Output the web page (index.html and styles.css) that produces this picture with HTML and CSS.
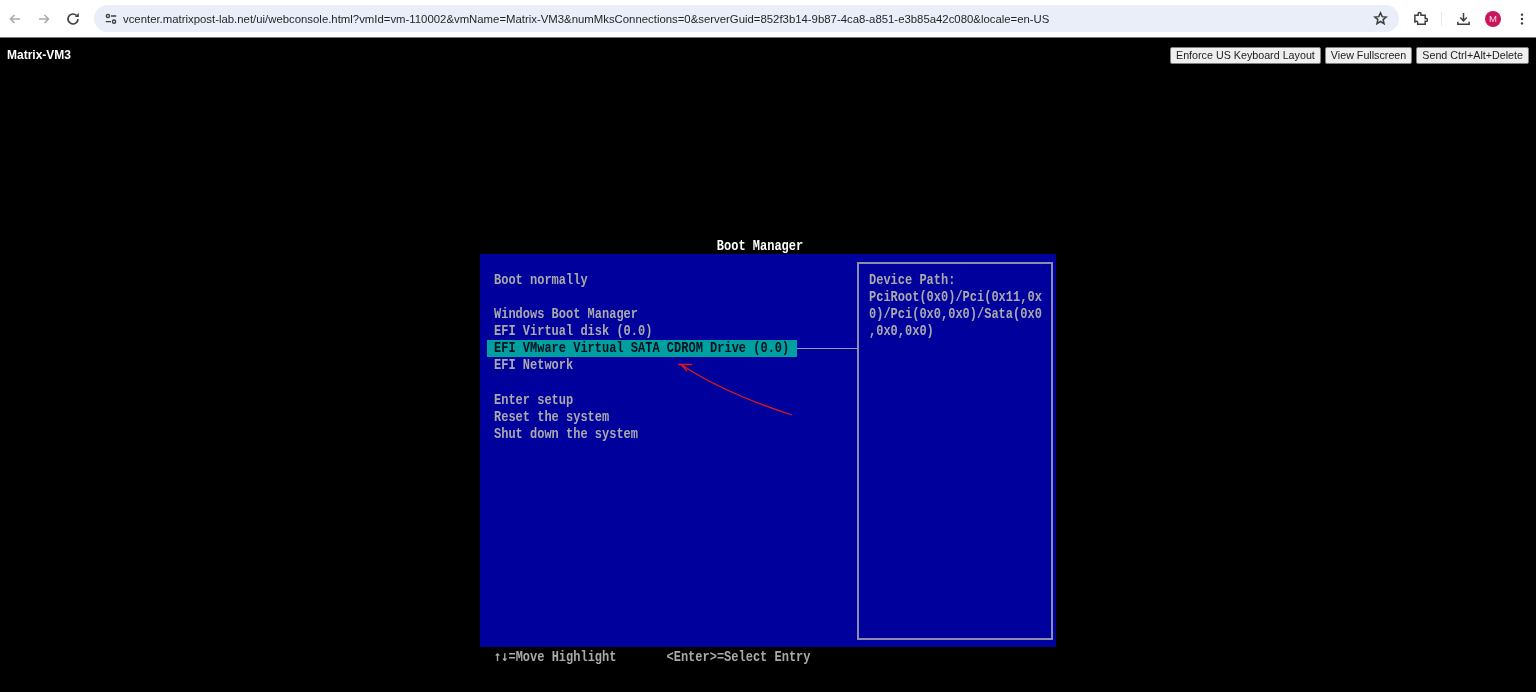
FILE: index.html
```html
<!DOCTYPE html>
<html lang="en">
<head>
<meta charset="utf-8">
<title>Matrix-VM3</title>
<link rel="stylesheet" href="styles.css">
</head>
<body>
<header class="chrome">
  <div class="nav">
    <svg class="ico dim" viewBox="0 0 16 16"><path d="M13 8H3.500M7.500 4 3.500 8l4 4"/></svg>
    <svg class="ico dim" viewBox="0 0 16 16"><path d="M3 8h9.500M8.500 4l4 4-4 4"/></svg>
    <svg class="ico" viewBox="0 0 16 16"><path d="M13 8a5 5 0 1 1-1.500-3.600"/><path class="solid" d="M13.800 2v4h-4z"/></svg>
  </div>
  <div class="omnibox">
    <span class="tune"><svg class="ico" viewBox="0 0 16 16"><circle cx="4.500" cy="4.500" r="1.800"/><path d="M8 4.500h6M2 11h6"/><circle cx="11.500" cy="11" r="1.800"/></svg></span>
    <span class="url">vcenter.matrixpost-lab.net/ui/webconsole.html?vmId=vm-110002&amp;vmName=Matrix-VM3&amp;numMksConnections=0&amp;serverGuid=852f3b14-9b87-4ca8-a851-e3b85a42c080&amp;locale=en-US</span>
    <svg class="ico star" viewBox="0 0 16 16"><path d="M8 2l1.800 4 4.200.4-3.200 2.800 1 4.300L8 11.200 4.200 13.500l1-4.300L2 6.400 6.200 6z"/></svg>
  </div>
  <div class="actions">
    <svg class="ico" viewBox="0 0 16 16"><path d="M2 4.500h3.500V3.200a1.500 1.500 0 0 1 3 0v1.300h4.500V8h1a1.500 1.500 0 0 1 0 3h-1v3H5v-1.500a1.500 1.500 0 0 0-3 0z"/></svg>
    <span class="sep"></span>
    <svg class="ico" viewBox="0 0 16 16"><path d="M8 2v8.500M4.500 7 8 10.500 11.500 7M2 11.500V14h12v-2.500"/></svg>
    <span class="avatar">M</span>
    <svg class="kebab" viewBox="0 0 4 16"><circle cx="2" cy="3" r="1.400"/><circle cx="2" cy="8" r="1.400"/><circle cx="2" cy="13" r="1.400"/></svg>
  </div>
</header>
<main class="console">
  <div class="toolbar">
    <h1 class="vm-name">Matrix-VM3</h1>
    <div class="buttons">
      <button class="btn">Enforce US Keyboard Layout</button>
      <button class="btn">View Fullscreen</button>
      <button class="btn">Send Ctrl+Alt+Delete</button>
    </div>
  </div>
  <section class="screen">
    <div class="screen-title"><span class="t">Boot Manager</span></div>
    <div class="bios">
      <ul class="menu">
        <li><span class="t">Boot normally</span></li>
        <li class="gap"><span class="t">Windows Boot Manager</span></li>
        <li><span class="t">EFI Virtual disk (0.0)</span></li>
        <li class="selected"><span class="t">EFI VMware Virtual SATA CDROM Drive (0.0)</span></li>
        <li><span class="t">EFI Network</span></li>
        <li class="gap"><span class="t">Enter setup</span></li>
        <li><span class="t">Reset the system</span></li>
        <li><span class="t">Shut down the system</span></li>
      </ul>
      <aside class="panel">
        <div><span class="t">Device Path:</span></div>
        <div><span class="t">PciRoot(0x0)/Pci(0x11,0x</span></div>
        <div><span class="t">0)/Pci(0x0,0x0)/Sata(0x0</span></div>
        <div><span class="t">,0x0,0x0)</span></div>
      </aside>
      <svg class="arrow" viewBox="0 0 130 70"><path d="M114 59C80 48 40 33 3 8.500M0 8.500h14M3 8.500l6 6.500"/></svg>
    </div>
    <div class="hints"><span class="t"><span class="arr">↑↓</span>=Move Highlight</span><span class="t">&lt;Enter&gt;=Select Entry</span></div>
  </section>
</main>
</body>
</html>
```
FILE: styles.css
```css
* { box-sizing: border-box; }
html, body { margin: 0; height: 100%; overflow: hidden; }
body { background: #000; display: flex; flex-direction: column; font-family: "Liberation Sans", Arial, sans-serif; }

.chrome { height: 38px; flex: none; background: #fff; display: flex; align-items: center; padding: 0 0 0 7px; border-bottom: 1px solid #777; filter: blur(.3px); }
.nav { display: flex; gap: 13px; width: 87px; align-items: center; }
.ico { width: 16px; height: 16px; fill: none; stroke: #3f3f3f; stroke-width: 1.6; flex: none; }
.ico.dim { stroke: #a9abae; }
.ico .solid { fill: #3f3f3f; stroke: none; }
.omnibox { width: 1305px; height: 27px; background: #e9eef8; border-radius: 14px; display: flex; align-items: center; padding: 0 11px 0 5px; flex: none; }
.tune { width: 24px; display: flex; justify-content: center; flex: none; }
.tune .ico { width: 14px; height: 14px; }
.url { flex: 1; font-size: 11.36px; color: #1f2124; white-space: nowrap; }
.star { width: 15px; height: 15px; }
.actions { display: flex; align-items: center; padding-left: 14px; }
.actions .ico { width: 15px; height: 15px; }
.sep { width: 1px; height: 14px; background: #dfe9f7; margin: 0 14px 0 13px; }
.avatar { width: 16px; height: 16px; border-radius: 50%; background: #c9155c; color: #f7d9e6; font-size: 9.500px; display: flex; align-items: center; justify-content: center; margin-left: 14px; }
.kebab { width: 4px; height: 14px; margin-left: 19px; fill: #3f3f3f; }

.console { flex: 1; display: flex; flex-direction: column; }
.toolbar { display: flex; justify-content: space-between; align-items: flex-start; padding: 10px 7px 0 7px; filter: blur(.3px); }
.vm-name { margin: 0; color: #fff; font-size: 12px; line-height: 14px; font-weight: 700; }
.buttons { display: flex; gap: 4px; margin-top: -1px; }
.btn { height: 17px; padding: 0 5px; background: #efefef; border: 1px solid #808080; border-radius: 2px; color: #222; font: 10.720px/15px "Liberation Sans", Arial, sans-serif; }

.screen { width: 576px; margin: 173px auto 0 auto; color: #aaa; font-family: "Liberation Mono", monospace; font-size: 12px; line-height: 17.150px; font-weight: 700; filter: blur(.35px); }
.t { display: inline-block; transform: translateY(.4px) scaleY(1.22); }
.arr { font-family: "DejaVu Sans Mono", monospace; line-height: 1; }
.screen-title { color: #fff; height: 17px; line-height: 17px; padding-right: 16px; text-align: center; transform: translateY(1px); }
.bios { position: relative; height: 393px; background: #00009c; display: flex; justify-content: space-between; padding: 17.600px 3px 7px 7px; }
.menu { list-style: none; margin: 0; padding: 0; width: 310px; }
.menu li { padding-left: 7px; height: 17.150px; white-space: pre; }
.menu .gap { margin-top: 17.150px; }
.menu .selected { background: #00a0a0; color: #001020; position: relative; }
.menu .selected::after { content: ""; position: absolute; left: 100%; top: 8px; width: 61px; height: 1px; background: #9a9ab4; }
.panel { width: 196px; height: 378px; margin-top: -9.600px; border: 2px solid #8c8cab; padding: 7.600px 0 0 10px; white-space: nowrap; }
.arrow { position: absolute; left: 198px; top: 102px; width: 130px; height: 70px; fill: none; stroke: #e01818; stroke-width: 1.300; }
.hints { display: flex; align-items: flex-start; gap: 50px; padding: 2px 0 0 14px; height: 19px; line-height: 17px; }
```
